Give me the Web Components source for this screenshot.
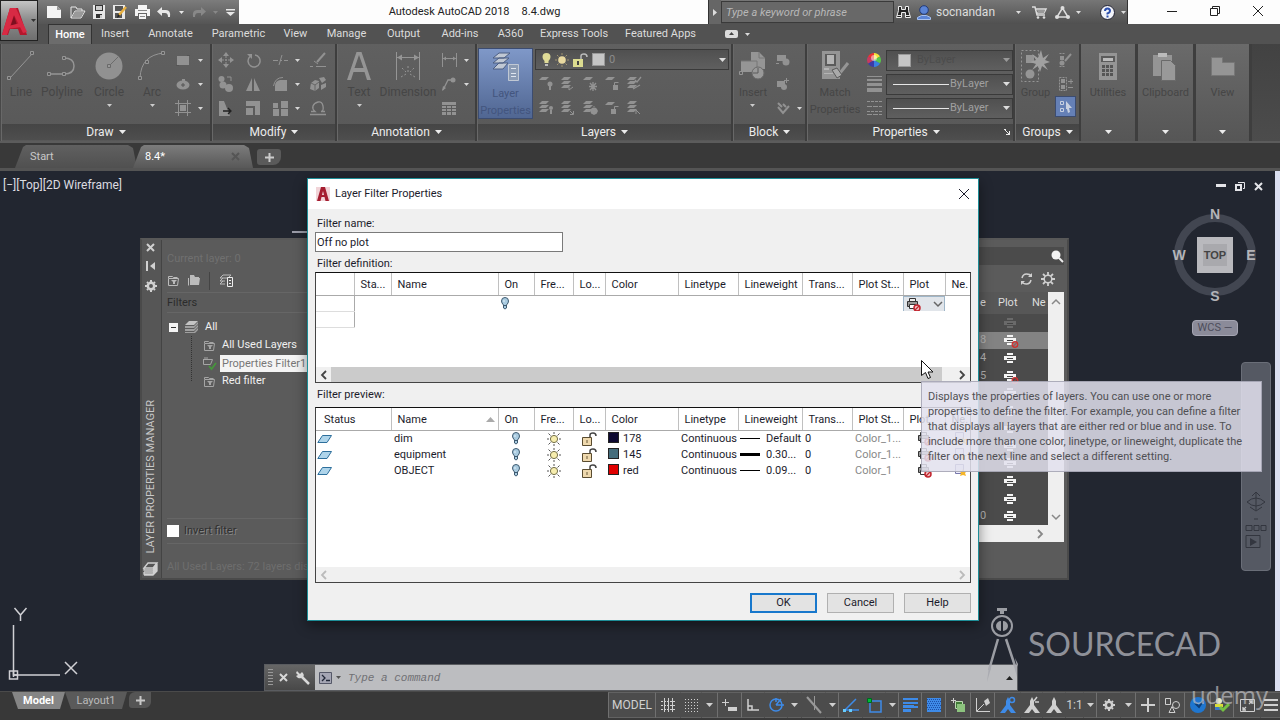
<!DOCTYPE html>
<html lang="en">
<head>
<meta charset="utf-8">
<title>Autodesk AutoCAD 2018 - 8.4.dwg</title>
<style>
html,body{margin:0;height:100%;overflow:hidden;background:#222630}
body{font:11px/14px Roboto,"Liberation Sans",sans-serif;color:#ddd}
</style>
</head>
<body>
<cad-app></cad-app>
<script>
const BASE = `*{box-sizing:border-box}
:host{display:block}
button,input,select{font:inherit;color:inherit;margin:0;padding:0;border:0;background:none;border-radius:0;outline:0}
button{display:flex;align-items:center;justify-content:center}`;
const define = (name, css, html) => customElements.define(name, class extends HTMLElement {
  constructor() {
    super();
    this.attachShadow({mode: 'open'});
  }
  connectedCallback() {
    const t = document.createElement('template');
    t.innerHTML = `<style>${BASE}${css}</style>${typeof html === 'function' ? html(this) : html}`;
    this.shadowRoot.replaceChildren(t.content.cloneNode(true));
  }
});

/* Icon set: [width, height, svg content]. Strokes and fills follow currentColor. */
const F = 'fill="currentColor"';
const S = 'fill="none" stroke="currentColor"';
const sheet = (x, y) => `<path ${F} d="M${x + 3} ${y}h7l-3 3h-7z"/>`;
const stack = sheet(0, 0) + sheet(0, 4) + sheet(0, 8);
const person = `<path ${F} d="M8 0l2 4 0 4 6 8h-5l-3-4-3 4H0l6-8V4z"/>`;
const printer = `<path fill="#eee" stroke="#333" d="M3.5 .5h6v3h-6z"/><path fill="#999" stroke="#333" d="M1.5 3.5h10v5h-10z"/><path fill="#fff" stroke="#333" d="M3.5 6.5h6v4h-6z"/>`;
const noplot = `<circle cx="11" cy="10" r="3" fill="#f3c5c5" stroke="#c2252f" stroke-width="1.5"/><path stroke="#c2252f" stroke-width="1.3" d="M9 12l4-4"/>`;
const miniPrint = `<path ${F} d="M3 0h6v2H3zM0 3h12v4H0zM3 8h6v2H3z"/><path stroke="#444" d="M3 5.5h6"/>`;
const ICONS = {
  logo: [26, 28, `<path fill="#b5162c" d="M0 28L8 1h8l9 27h-7l-2-6H8l-2 6z"/><path fill="#d82a44" d="M8 1h6l11 24-4 1L12 8 5 28H0z"/><path fill="#7d0f20" d="M9 18l3-9 3 9z"/><path fill="#d82a44" d="M3 20l15-4 2 4-15 2z"/>`],
  small: [14, 14, `<path fill="#f1d4d8" d="M0 0h14v14H0z"/><path fill="#a51d30" d="M1 14L5 0h4l4 14H9.5L8.5 10h-3L4.5 14zM6 8h2L7 4z"/>`],
  new: [15, 14, `<path fill="#f4f4f4" d="M0 1h10l4 4v8H0z"/><path fill="#999" d="M10 1v4h4z"/>`],
  open: [16, 13, `<path ${S} d="M1 12V1h5l1 2h5v2M1 12l4-7h10l-4 7z"/><path fill="#999" d="M5 6h9l-3 5H2z"/>`],
  save: [12, 14, `<path fill="#e8e8e8" d="M0 0h12v14H0z"/><path fill="#333" d="M2 0h8v6H2zM3 9h6v4H3z"/><path fill="#ccc" d="M3 1h6v4H3zM7 10h2v3H7z"/>`],
  saveas: [14, 14, `<path fill="#e8e8e8" d="M0 0h12v14H0z"/><path fill="#555" d="M2 1h8v5H2zM2 8h7v5H2z"/><path stroke="#e8b040" stroke-width="2.5" d="M6 10l7-8"/><path fill="#222" d="M4 13l1-4 2 2z"/>`],
  print: [15, 14, `<path fill="#f4f4f4" d="M3 0h9v4H3zM0 4h15v7h-3V8H3v3H0zM4 9h7v5H4z"/><path stroke="#888" d="M5 11.5h5M3 5.5h9"/>`],
  undo: [14, 11, `<path ${F} d="M5 0v3h4q5 0 4 7h-2q0-4-3-4H5v3L0 4.5z"/>`],
  redo: [14, 11, `<path ${F} d="M9 0v3H5Q0 3 1 10h2q0-4 3-4h3v3l5-4.5z"/>`],
  custom: [9, 7, `<path ${F} d="M0 0h9v1.5H0zM0 3h9L4.5 7z"/>`],
  down: [7, 4, `<path ${F} d="M0 0h7L3.5 4z"/>`],
  down5: [5, 3, `<path ${F} d="M0 0h5L2.5 3z"/>`],
  up: [7, 4, `<path ${F} d="M3.5 0L7 4H0z"/>`],
  right: [4, 7, `<path ${F} d="M0 0l4 3.5L0 7z"/>`],
  binoc: [15, 14, `<path fill="#222" stroke="#eee" d="M2.5 1.5h3v3h4v-3h3v4l2 7h-5v-5h-4v5h-5l2-7z"/><path stroke="#ddd" d="M1 10.5h4M10 10.5h4"/>`],
  user: [14, 15, `<circle cx="7" cy="5" r="4.3" fill="#5b84d6" stroke="#223a78"/><path fill="#5b84d6" stroke="#a9c2f0" d="M.5 14.5v-2l4-2h5l4 2v2z"/>`],
  cart: [15, 13, `<path ${S} stroke-width="1.5" d="M0 1h3l2 8h8M4 3h10l-2 4H5"/><path fill="#999" d="M5 4h8l-1 3H6z"/><circle cx="6" cy="11.5" r="1.3" ${F}/><circle cx="12" cy="11.5" r="1.3" ${F}/>`],
  a360: [15, 13, `<path ${S} stroke-width="1.5" d="M7.5 2L2 11h11z"/><circle cx="7.5" cy="2" r="2" ${F}/><circle cx="2" cy="11" r="2" ${F}/><circle cx="13" cy="11" r="2" ${F}/>`],
  help: [15, 15, `<circle cx="7.5" cy="7.5" r="7" fill="#f2f4fa" stroke="#223"/><path fill="none" stroke="#2c4fae" stroke-width="2" d="M5 6q0-2.5 2.5-2.5T10 6q0 1.5-2.5 2.5v1"/><path fill="#2c4fae" d="M6.5 10.5h2v2h-2z"/>`],
  min: [10, 10, `<path ${S} d="M0 5.5h10"/>`],
  restore: [10, 10, `<path ${S} d="M.5 2.5h7v7h-7zM2.5 2.5v-2h7v7h-2"/>`],
  close: [10, 10, `<path ${S} d="M0 0l10 10M10 0L0 10"/>`],
  line: [28, 30, `<path ${S} d="M3 27L25 3"/><path fill="#5b5b5b" stroke="currentColor" d="M.5 25.5h3v3h-3zM23.5 .5h3v3h-3z"/>`],
  pline: [30, 20, `<path ${S} stroke-width="1.5" d="M2 18h15q10 0 10-8t-10-8"/><path fill="#5b5b5b" stroke="currentColor" d="M.5 16.5h3v3h-3zM15.5 16.5h3v3h-3zM15.5 .5h3v3h-3z"/>`],
  circle: [28, 28, `<circle cx="14" cy="14" r="13.5" fill="#919191"/><path stroke="#6c6c6c" d="M14 14l9-9"/><path fill="#999" stroke="#6a6a6a" d="M12.5 12.5h3v3h-3z"/>`],
  arc: [28, 30, `<path ${S} d="M2 27Q3 4 26 2"/><path fill="#5b5b5b" stroke="currentColor" d="M.5 25.5h3v3h-3zM7.5 9.5h3v3h-3zM23.5 .5h3v3h-3z"/>`],
  rect: [14, 11, `<path ${F} d="M1 1h12v9H1z"/><path stroke="#555" d="M0 10.5h3M11 .5h3"/>`],
  ellipse: [14, 11, `<ellipse cx="7" cy="6" rx="6.5" ry="4.5" ${F}/><path stroke="#555" d="M7 4v4M5 6h4"/><path ${F} d="M6 0h3v3H6z"/>`],
  hatch: [16, 16, `<path ${S} d="M3.5 0v16M12.5 0v16M0 3.5h16M0 12.5h16"/><path ${F} d="M5 5h6v6H5z"/>`],
  move: [16, 16, `<path ${S} stroke-dasharray="2 1" d="M8 1v14M1 8h14"/><path ${F} d="M8 0l3 4H5zM8 16l3-4H5zM0 8l4-3v6zM16 8l-4-3v6z"/>`],
  rotate: [14, 15, `<path ${S} stroke-width="1.5" d="M4 3.5A6 6 0 1 0 9 2"/><path ${F} d="M1 1h5v5z"/>`],
  trim: [15, 12, `<path ${S} d="M0 6.5h5M7 6.5h2M11 6.5h4M6 11l3-10"/>`],
  erase: [16, 15, `<path ${S} stroke-width="2" d="M7 9l8-9"/><path ${S} d="M0 13.5h3M6 13.5h10M4 8l4 3"/>`],
  copy: [16, 16, `<circle cx="3.5" cy="3" r="3" ${F}/><circle cx="5" cy="9" r="3.5" ${F}/><circle cx="11" cy="12" r="4" ${F}/><path ${S} d="M9 1h4v4"/>`],
  mirror: [14, 14, `<path ${F} d="M6 1v13H0zM8 1v13h6z"/>`],
  fillet: [14, 14, `<path ${F} d="M2 14V9q0-5 5-6h7v11z"/><path ${S} d="M.5 9Q2 .5 10 .5"/>`],
  explode: [16, 14, `<path ${F} d="M1 6l4-3 4 1v7l-4 3-5-2zM9 1l5-1 2 3-4 3zM11 8l5-2v4l-5 3z"/><path stroke="#666" fill="none" d="M1 6l4 2 4-3M5 8v6"/>`],
  stretch: [14, 15, `<path ${F} d="M0 0h5l6 15H0z"/><path stroke="#222" stroke-width="1.3" d="M4 10h8M9 7l3 3-3 3" fill="none"/>`],
  scale: [14, 14, `<path ${F} d="M0 0h14v14H9V5H0z"/><path ${F} d="M0 7h7v7H0z"/>`],
  array: [15, 15, `<path ${F} d="M8 0h7v7H8zM0 8h6v7H0zM8 8h7v7H8zM0 2h5v5H0z"/>`],
  offset: [16, 14, `<path ${S} stroke-width="1.3" d="M0 13.5h16M1 10.5h4Q2 8 3 5t5-4 5 4-2 5.5h4"/>`],
  text: [24, 28, `<path ${F} d="M0 28L9.5 0h5L24 28h-4l-2.5-8h-11L4 28zM7.5 16h9L12 3z"/>`],
  dim: [26, 28, `<path ${S} d="M1.5 0v28M24.5 0v28M2 5.5h22"/><path ${F} d="M2 5.5l5-3v6zM24 5.5l-5-3v6z"/><path ${S} stroke-dasharray="2 2" d="M13 14v6M6 25l5-3M20 25l-5-3M7 16l4 4M19 16l-4 4"/>`],
  linear: [15, 14, `<path ${S} d="M.5 0v14M14.5 0v14M1 5.5h13"/><path ${F} d="M1 5.5l3-2v4zM14 5.5l-3-2v4z"/>`],
  leader: [14, 14, `<path ${S} stroke-width="1.3" d="M1 13L6 3h3"/><circle cx="11" cy="3" r="2.5" ${F}/><path ${F} d="M0 14l1-5 3 2z"/>`],
  table: [14, 13, `<path ${F} d="M0 0h14v13H0z"/><path stroke="#5b5b5b" d="M0 3.5h14M0 6.5h14M0 9.5h14M4.5 4v9M9.5 4v9"/>`],
  layerprop: [28, 30, `<path ${F} d="M7 1h11l-6 5H1zM7 6h10l-6 5H1zM7 11h9l-5 6H1z" stroke="#4c5e82"/><path fill="#8c9cb5" stroke="#c0c8d4" d="M16.5 12.5h10v16h-10z"/><path stroke="#dfe5ee" d="M19 16.5h5M19 21.5h5M19 24.5h5"/>`],
  l1: [14, 14, sheet(0, 0) + `<circle cx="11" cy="7" r="2.5" ${F}/><path ${F} d="M10 9h2v4h-2z"/>`],
  l2: [14, 14, stack + `<path ${S} d="M8 13l4-3M8 13v-3"/>`],
  l3: [14, 14, sheet(0, 0) + `<path ${S} stroke-width="1.3" d="M10 5v9M6 9.5h8M7 6l6 7M13 6l-6 7"/>`],
  l4: [14, 14, sheet(0, 0) + `<path ${F} d="M8 8h5v5H8z"/><path ${S} d="M9.5 8V5.5h4"/>`],
  l5: [14, 14, stack + `<path ${S} stroke-width="1.3" d="M8 3l2 2 4-5M6 12l7-4"/>`],
  l6: [14, 14, stack + `<circle cx="12" cy="7" r="2" ${F}/><path ${F} d="M11 9h2v4h-2z"/>`],
  l7: [14, 14, stack + `<path ${S} d="M9 10l3 3M12.5 10v3.5H9"/>`],
  l8: [15, 14, stack + `<circle cx="11" cy="10" r="3.5" ${F}/><path ${S} stroke-dasharray="1 1" d="M11 5v9M6 10h9"/>`],
  l9: [14, 14, sheet(0, 1) + `<path ${F} d="M6 8h5v5H6z"/><path ${S} d="M9.5 8V5.5h4"/>`],
  l10: [14, 14, stack + `<path ${S} d="M9 9l4 4M9 9v4"/>`],
  bulb: [9, 14, `<path fill="#e0dc98" d="M4.5 0a4 4 0 0 1 4 4q0 2-2 4v2h-4V8q-2-2-2-4a4 4 0 0 1 4-4z"/><path fill="#bbb" d="M3 11h3v2H3z"/>`],
  bluebulb: [8, 13, `<path fill="#a9cbe0" stroke="#3e5a70" d="M4 .5q3.5 0 3.5 3.5Q7.5 6 5.5 8v3q-1.5 2-3 0V8Q.5 6 .5 4 .5 .5 4 .5z"/><path stroke="#3e5a70" d="M2 8.5h4"/><path stroke="#e6f2fa" d="M3 3v2"/>`],
  sun: [14, 14, `<circle cx="7" cy="7" r="3.8" fill="#e9d9a0"/><path stroke="#a09470" d="M7 0v2M7 12v2M0 7h2M12 7h2M2 2l1.5 1.5M12 2l-1.5 1.5M2 12l1.5-1.5M12 12l-1.5-1.5"/>`],
  sun2: [14, 14, `<circle cx="7" cy="7" r="3.6" fill="#f6edae" stroke="#75704a"/><path stroke="#555" d="M7 0v2M7 12v2M0 7h2M12 7h2M1.5 1.5l2 2M12.5 1.5l-2 2M1.5 12.5l2-2M12.5 12.5l-2-2"/>`],
  lock: [15, 14, `<path fill="#dcdc90" d="M0 6h10v8H0z"/><path fill="none" stroke="#bbb" stroke-width="1.5" d="M8 6V3q0-2 3-2t3 3"/><path fill="#444" d="M4 8h2v4H4z"/>`],
  lock2: [15, 14, `<path fill="#efd9ae" stroke="#5a4c30" d="M.5 5.5h9v8h-9z"/><path fill="none" stroke="#444" stroke-width="1.5" d="M8 5V3q0-2 3-2t3 3"/><path stroke="#6b5a38" d="M5 8v3"/>`],
  insert: [28, 28, `<path ${F} d="M2 9h16v11H2zM12 0h8l6 6v11H12z"/><path stroke="#777" d="M20 0v6h6M2 9h16v11" fill="none"/><circle cx="19" cy="21" r="6" fill="#999" stroke="#6a6a6a"/><path stroke="#5b5b5b" d="M19 21v-5M14 21h5"/><path ${S} d="M.5 19.5h3v3h-3z"/>`],
  b1: [14, 11, `<path ${F} d="M1 0h9v6H1z"/><circle cx="10" cy="7" r="3.5" ${F}/><path ${S} d="M0 8.5h3"/>`],
  b2: [14, 13, `<path ${F} d="M1 3h8v6H1z"/><circle cx="8" cy="9" r="3" ${F}/><path ${S} d="M10.5 0v5M8 2.5h5"/>`],
  b3: [13, 12, `<path ${S} stroke-width="2" d="M1 1l4 4M1 5l5 6 6-7M6 2l3 3"/>`],
  match: [30, 30, `<path ${F} d="M2 0h18v28H2z"/><path fill="#5b5b5b" d="M5 3h11v12H5z"/><path fill="#b4b4b4" d="M7 4h7v9H7zM4 17h5v2H4zM4 22h9v1H4z"/><path ${S} stroke-width="3" d="M20 22l8-10"/><path fill="#aaa" stroke="#5b5b5b" d="M12 19l5-2 5 7-5 3z"/>`],
  wheel: [14, 14, `<path fill="#e33" d="M7 7L1 3.5A7 7 0 0 1 7 0z"/><path fill="#f8e23a" d="M7 7V0a7 7 0 0 1 6 3.5z"/><path fill="#58c84a" d="M7 7l6-3.5a7 7 0 0 1 0 7z"/><path fill="#3a7fe0" d="M7 7l6 3.5A7 7 0 0 1 7 14z"/><path fill="#3d3aa8" d="M7 7v7a7 7 0 0 1-6-3.5z"/><path fill="#c83a60" d="M7 7l-6 3.5a7 7 0 0 1 0-7z"/><circle cx="7" cy="5" r="3" fill="#fff" opacity=".5"/>`],
  weights: [15, 16, `<path ${F} d="M0 0h15v1H0zM0 3h15v2H0zM0 7h15v3H0zM0 12h15v4H0z"/>`],
  types: [15, 14, `<path ${S} stroke-dasharray="3 1" d="M0 .5h15M0 10.5h15"/><path ${S} stroke-dasharray="5 1" d="M0 5.5h15M0 13.5h15"/>`],
  group: [29, 32, `<path ${S} stroke-dasharray="2 2" d="M.5 .5h17v31H.5z"/><path ${F} d="M5 5h8v8H5z"/><circle cx="9" cy="24" r="4.5" ${F}/><path fill="#a0a0a0" d="M20 0l2 8 6-4-4 6 5 2-6 2 4 6-6-4-2 6-2-6-6 4 4-6-6-2 6-2-4-6 6 4z"/>`],
  g1: [13, 14, `<path ${S} stroke-dasharray="2 1" d="M.5 .5h6M.5 13.5h6"/><circle cx="3" cy="10" r="2.5" ${F}/><path ${F} d="M1 3h4v4H1z"/><path ${S} stroke-width="2" d="M6 8l6-7"/>`],
  g2: [14, 14, `<path ${S} stroke-dasharray="2 1" d="M.5 .5h7v13h-7z"/><path ${F} d="M2 2h4v4H2zM2 8h4v4H2z"/><path ${S} d="M12 2v5M9 4.5h5M9 10.5h5"/>`],
  g3: [12, 13, `<path ${S} d="M.5 1.5h3v3h-3zM.5 8.5h3v3h-3z"/><path ${F} d="M6 1l6 7H9l1 4-2 1-1-4H6z"/>`],
  calc: [18, 27, `<path ${F} d="M0 0h18v27H0z"/><path fill="#5b5b5b" d="M2 3h14v6H2z"/><path fill="#bbb" d="M4 5h10v3H4z"/><path stroke="#555" stroke-dasharray="3 1" d="M3 13.5h12M3 17.5h12M3 21.5h12" stroke-width="3"/>`],
  clip: [24, 29, `<path ${F} d="M0 3h19v21H0z"/><path fill="#bbb" d="M5 1h9v4H5z"/><path fill="#999" stroke="#6a6a6a" d="M8.5 8.5h9l5 5v15h-14z"/>`],
  view: [24, 19, `<path ${F} stroke="#777" d="M.5 .5h11v5h12v13H.5z"/>`],
  corner: [6, 6, `<path ${S} d="M0 .5h2M0 0l5 5M5.5 2v4M2 5.5h4"/>`],
  plus: [9, 9, `<path ${S} stroke-width="2" d="M4.5 0v9M0 4.5h9"/>`],
  x: [9, 9, `<path ${S} stroke-width="2" d="M1 1l7 7M8 1L1 8"/>`],
  pin: [9, 10, `<path ${F} d="M0 0h2v10H0zM9 1v8L4 5z"/>`],
  cog: [14, 14, `<circle cx="7" cy="7" r="3.8" ${S} stroke-width="1.5"/><path ${S} stroke-width="1.8" d="M7 0v3M7 11v3M0 7h3M11 7h3M2 2l2.2 2.2M12 2L9.8 4.2M2 12l2.2-2.2M12 12l-2.2-2.2"/>`],
  gearsolid: [12, 12, `<circle cx="6" cy="6" r="3.2" ${S} stroke-width="2.5"/><path ${S} stroke-width="2" d="M6 0v2M6 10v2M0 6h2M10 6h2M2 2l1 1M10 2L9 3M2 10l1-1M10 10L9 9"/>`],
  folderF: [12, 11, `<path ${S} d="M1.5 10.5h9l1-7h-10zM1.5 3V1.5h4l1 1h4"/><path ${F} d="M4 5h6L8 7v2H6V7z"/>`],
  folder: [12, 11, `<path ${F} d="M2 0h4l1 2h4v1h1l-1 7H2z"/><path ${S} d="M.5 3v7.5"/>`],
  states: [15, 13, `<path ${S} d="M4 1h8L9 4H1zM1 7h5M1 10h5M4 4L1 7M4 7l-3 3"/><path fill="#5b5b5b" stroke="#eee" d="M8.5 3.5h5v9h-5z"/><path stroke="#eee" d="M10 6.5h2M10 9.5h2"/>`],
  books: [13, 12, `<path fill="#c4c4c4" d="M4 0h9L9 4H0z"/><path fill="#a0a0a0" d="M0 5h9l4-4v2L9 7H0zM0 8h9l4-4v2l-4 4H0zM0 11h9l4-4v2l-3 3H0z"/>`],
  check: [13, 13, `<path ${S} d="M.5 2v5.5h7l2-5H1M1 1h4"/><path fill="none" stroke="#46963c" stroke-width="1.8" d="M6 9l2.5 3L13 6"/>`],
  minus: [9, 9, `<path fill="#f4f4f4" d="M0 0h9v9H0z"/><path stroke="#333" d="M2 4.5h5"/>`],
  layers: [15, 14, `<path ${S} stroke-width="1.3" d="M1 6l4-5h9l-4 5zM1 6v2h9l4-5v2L10 10H1M1 10v2h9l4-5v2l-4 4H1"/>`],
  search: [12, 12, `<circle cx="5" cy="5" r="4.5" fill="#f2f2f2"/><path stroke="#eee" stroke-width="2" d="M8 8l4 4"/>`],
  refresh: [11, 12, `<path ${S} stroke-width="1.5" d="M1 5q1-4 4.5-4T10 3M10 7q-1 4-4.5 4T1 9"/><path ${F} d="M11 0v4H7zM0 12V8h4z"/>`],
  print2: [12, 10, miniPrint],
  noprint2: [12, 10, miniPrint + `<circle cx="11" cy="9.5" r="2.8" fill="none" stroke="#d0302f" stroke-width="1.3"/><path stroke="#d0302f" d="M9 11.5l4-4"/>`],
  noprint: [15, 14, printer + noplot],
  newvp: [15, 13, `<path fill="#eef" stroke="#77a" d="M2.5 .5h8v9h-8z"/><path fill="#f5b52a" d="M10 5l1 2h3l-2 2 1 3-3-1-3 1 1-3-2-2h3z"/>`],
  sheet: [16, 8, `<path fill="#aed4ea" stroke="#2d6f9c" d="M5.5 .5h9l-4.5 7H.8z"/>`],
  asc: [9, 5, `<path fill="#aaa" d="M4.5 0L9 5H0z"/>`],
  lt: [5, 8, `<path ${S} stroke-width="1.8" d="M5 0L1 4l4 4"/>`],
  gt: [5, 8, `<path ${S} stroke-width="1.8" d="M0 0l4 4-4 4"/>`],
  vdown: [8, 5, `<path ${S} stroke-width="1.5" d="M0 0l4 4 4-4"/>`],
  vup: [8, 5, `<path ${S} stroke-width="1.5" d="M0 5l4-4 4 4"/>`],
  wmin: [10, 4, `<path ${F} d="M0 0h10v3H0z"/>`],
  wrest: [10, 10, `<path ${S} stroke-width="2" d="M1 4h5v5H1z"/><path ${S} d="M3 1.5h6.5v6H8"/>`],
  wrench: [14, 14, `<path ${S} stroke-width="2.5" d="M6 6l7 7"/><path ${F} d="M1 0l3 3 2-2q3 3 1 5T2 7L0 5l2-1-2-2z"/>`],
  prompt: [13, 12, `<path fill="#a5a6b4" stroke="#555868" d="M.5 .5h12v11H.5z"/><path fill="none" stroke="#222838" stroke-width="1.3" d="M3 3l3 3-3 3M7 8.5h4"/>`],
  sgrid: [14, 14, `<path ${S} d="M3.5 0v14M7.5 0v14M11.5 0v14"/><path ${S} stroke-dasharray="2 1" d="M0 3.5h14M0 7.5h14M0 11.5h14"/>`],
  snap: [14, 14, `<path ${S} stroke-dasharray="1 2" d="M1 1.5h13M1 4.5h13M1 7.5h13M1 10.5h13M1 13.5h13"/>`],
  dyn: [15, 13, `<path ${S} d="M3.5 0v7M0 3.5h7"/><path ${F} d="M6 8h9v4H6z"/>`],
  ortho: [12, 12, `<path ${S} stroke-width="1.5" d="M1 0v11h11M1 7h4v4"/>`],
  polar: [15, 14, `<circle cx="7" cy="7" r="6" ${S} stroke-width="1.5"/><path ${S} stroke-width="1.5" d="M7 7h8M7 7l5-6M7 0v4"/>`],
  iso: [16, 18, `<path stroke="#999" d="M1 1l14 16" stroke-width="2"/><path stroke="#999" d="M8.5 0v14"/>`],
  otrack: [16, 13, `<path ${S} stroke-width="1.5" d="M13 0L2 11h14"/><path fill="#6cf" d="M0 10h3v3H0zM6 10h3v3H6z"/>`],
  osnap: [15, 15, `<path ${S} stroke-width="1.5" d="M3 3h11v11H3z"/><path fill="#0b3" stroke="#062" d="M.5 .5h4v4h-4z"/>`],
  lwt: [15, 14, `<path ${F} d="M0 0h15v2H0zM0 4h15v2H0zM0 7h11v3H0zM0 11h8v3H0zM5 8h10v2H5z"/>`],
  trans: [14, 14, `<path ${F} d="M0 0h14v14H0z"/><path stroke="#1c4fa8" stroke-dasharray="1 1" d="M0 1.5h14M1 3.5h14M0 5.5h14M1 7.5h14M0 9.5h14M1 11.5h14"/>`],
  sel: [14, 14, `<path ${S} d="M0 2.5h5M2.5 0v5"/><path fill="#3f7b36" stroke="#bcd8b4" d="M4.5 3.5h7v7h-7z"/><path fill="#8cc37e" d="M6 6h8v8H6z"/>`],
  gizmo: [15, 15, `<path ${S} d="M1.5 0v13.5H15M2 13L9 6"/><path ${F} d="M9 3l4-3 2 5-4 3z"/>`],
  anno: [16, 16, person + `<circle cx="12" cy="3" r="2.5" ${S} stroke-width="1.5"/>`],
  anno2: [16, 16, person + `<path ${S} stroke-width="1.5" d="M10 4l3-4M11 5h4"/>`],
  anno3: [16, 16, person],
  bigplus: [14, 14, `<path ${S} stroke-width="2" d="M7 0v14M0 7h14"/>`],
  shapes: [15, 15, `<path ${S} d="M.5 .5h5v6h-5zM4 14.5l3-6 3 6z"/><circle cx="11" cy="7" r="3.5" ${S}/>`],
  perf: [16, 16, `<circle cx="8" cy="8" r="8" fill="#1f76cf"/><path stroke="#0c3e78" stroke-width="2" d="M5 6l4 4 4-6" fill="none"/>`],
  trust: [14, 14, `<circle cx="4" cy="3" r="3" fill="#e5e5c8"/><path fill="#d8dc3a" d="M0 6h8v3H0z"/><path fill="#3d78c8" d="M0 9h6v3H0z"/><path fill="none" stroke="#74c043" stroke-width="3" d="M5 9l3 3 6-6"/>`],
  full: [15, 13, `<path ${S} d="M.5 .5h14v12H.5z"/><path ${S} stroke-width="1.3" d="M9 5l3-3M9 2h3v3M6 8l-3 3M3 8v3h3"/>`],
  burger: [14, 12, `<path ${F} d="M0 0h14v2H0zM0 5h14v2H0zM0 10h14v2H0z"/>`],
  cloud: [13, 8, `<rect width="13" height="8" rx="2" ${F}/><path fill="#444" d="M6.5 2L9 5H4z"/>`],
  ucs: [72, 74, `<path ${S} stroke-width="1.5" d="M5.5 18v52M6 68h46"/><path ${S} stroke-width="1.5" d="M1.5 64h8v8h-8zM5.5 64v4h4M6.5 1l6 7 6-7M12.5 8v6M57 55l12 12M69 55L57 67"/>`],
  compass: [30, 74, `<path ${F} d="M9 0h10v3H9zM12 3h4v3h-4z"/><circle cx="14" cy="18" r="10" ${S} stroke-width="2"/><path ${F} d="M13 13v10a5 5 0 0 1 0-10zM15 13v10a5 5 0 0 0 0-10z"/><path ${S} stroke-width="2.5" d="M10 31L1 62M18 31l9 27"/><path ${F} d="M1 58l2 2-4 14zM26 58l3-1 0 12zM27 50l3 6-1 3z"/>`],
  cursor: [12, 19, `<path fill="#fff" stroke="#111" d="M.5 .5v15l4-3 2.5 6 2.5-1-2.5-5.5h5z"/>`],
  cube: [90, 98, `<circle cx="45" cy="49" r="37" fill="none" stroke="#424651" stroke-width="8"/><path fill="#b9b9bd" d="M27 31h36v36H27z"/><path fill="#a9a9ad" d="M33 38h24v22H33z"/>`],
  nav: [22, 60, `<path ${S} d="M11 0v18M7 4l4-4 4 4M2 10q9-8 18 0-9 8-18 0M5 15l6 4 6-4M9 27h4M1 33.5h6v5H1zM9 33.5h5v5H9zM16 33.5h5v5h-5zM1 43.5h14v12H1z"/><path ${F} d="M5 46l7 4-7 4z"/>`]
};
define('cad-icon', `:host{display:inline-flex;flex:none}svg{display:block;overflow:visible}`, el => {
  const [w, h, body] = ICONS[el.getAttribute('name')];
  return `<svg width="${w}" height="${h}" viewBox="0 0 ${w} ${h}" aria-hidden="true">${body}</svg>`;
});
const I = (n, c) => `<cad-icon name="${n}"${c ? ` class="${c}"` : ''}></cad-icon>`;

/* ---------- Title bar and menu tabs ---------- */
define('title-bar', `
:host{display:grid;grid-template-columns:38px 1fr;grid-template-rows:24px 20px;background:#525252}
.app{grid-row:1/3;align-self:start;height:41px;border:1px solid #222;background:linear-gradient(#c4c4c4,#8a8a8a 50%,#6f6f6f);gap:3px;color:#333;position:relative;z-index:2}
.bar{display:grid;grid-template-columns:201px 1fr 420px 152px}
.quick{display:flex;align-items:center;padding:0 4px 0 9px;justify-content:space-between;background:linear-gradient(#7c7c7c,#555);color:#e8e8e8}
.dim{color:#888}
.title{background:#fdfdfd;color:#222;display:flex;align-items:center;justify-content:center;gap:12px;padding-left:2px}
.info{display:grid;grid-template-columns:12px 173px 1fr;background:linear-gradient(#767676,#505050);border:solid #333;border-width:0 1px}
.info>button{background:#666}
input{background:#686868;border:1px solid #3a3a3a;height:22px;padding-left:4px;font-style:italic;margin-top:1px}
input::placeholder{color:#b8b8b8;opacity:1}
.acc{display:grid;grid-template-columns:18px 24px 74px 16px 26px 20px 12px 12px 22px 10px;place-items:center}
.acc b{font-weight:400;font-size:12px;justify-self:start}
.win{background:#fdfdfd;color:#222;display:grid;grid-template-columns:1fr 1fr 1fr;padding:0 0 2px 22px}
nav{display:grid;grid-template-columns:10px 44px 46px 65px 71px 43px 59px 55px 58px 43px 84px 89px 60px;color:#dcdcdc}
nav a{display:flex;align-items:center;justify-content:center;color:inherit;text-decoration:none;white-space:nowrap}
nav a.on{background:#6c6c6c;border:1px solid #333;border-bottom:0;color:#fff;font-weight:500}
nav i{display:flex;gap:7px;align-items:center;justify-content:center;padding-left:5px}`,
`<button class="app" aria-label="Application menu">${I('logo')}${I('down5')}</button>
<div class="bar">
 <div class="quick">${['new','open','save','saveas','print','undo','down5'].map(n => `<button>${I(n)}</button>`).join('')}<button class="dim">${I('redo')}</button><button class="dim">${I('down5')}</button><button>${I('custom')}</button></div>
 <div class="title"><span>Autodesk AutoCAD 2018</span><span>8.4.dwg</span></div>
 <div class="info"><button aria-label="Expand">${I('right')}</button><input aria-label="Search" placeholder="Type a keyword or phrase">
 <div class="acc"><button>${I('binoc')}</button>${I('user')}<b>socnandan</b>${I('down5')}<button>${I('cart')}</button><button>${I('a360')}</button>${I('down5')}<i></i><button>${I('help')}</button>${I('down5')}</div></div>
 <div class="win"><button aria-label="Minimize">${I('min')}</button><button aria-label="Restore">${I('restore')}</button><button aria-label="Close">${I('close')}</button></div>
</div>
<nav><span></span>${['Home','Insert','Annotate','Parametric','View','Manage','Output','Add-ins','A360','Express Tools','Featured Apps'].map((t, i) => `<a href="#"${i ? '' : ' class="on"'}>${t}</a>`).join('')}<i>${I('cloud')}${I('down5')}</i></nav>`);

/* ---------- Ribbon ---------- */
define('big-tool', `
:host{height:74px;flex:none}
button{width:100%;height:100%;display:grid;grid-template-rows:36px auto 1fr;justify-items:center;align-items:center;color:#959595}
span{display:block;color:#464646;font-size:12px;line-height:17px;text-align:center;white-space:nowrap}
:host([two]) span{white-space:pre-line}
:host([two]) span,:host([small]) span{font-size:11px}
.a{color:#ccc;align-self:start;padding-top:3px}
:host([blue]) button{background:linear-gradient(#7f98c8,#506692);border:1px solid #3c4c70;color:#c0c8d4;height:71px}
:host([blue]) span{color:#43557e}`,
el => `<button>${I(el.getAttribute('icon'))}<span>${el.getAttribute('label')}</span>${el.hasAttribute('arrow') ? I('down5', 'a') : ''}</button>`);

define('ribbon-panel', `
:host{display:grid;grid-template-rows:80px 16px;background:linear-gradient(#606060,#585858);border-right:2px solid #3e3e3e;border-left:1px solid #686868}
.body{display:flex;padding-top:4px;overflow:hidden}
.t{background:linear-gradient(#454545,#4e4e4e);display:flex;align-items:center;font-size:12px;color:#ececec}
.t div{flex:1;display:flex;align-items:center;justify-content:center;gap:5px}
.t>cad-icon{padding-right:3px}
:host([tall]){background:linear-gradient(#6a6a6a,#565656);border-left:0;border-right:3px solid #3e3e3e}
:host([tall]) .t{background:none}`,
el => `<div class="body"><slot></slot></div><div class="t"><div>${el.getAttribute('label') || ''}${I('down')}</div>${el.hasAttribute('corner') ? I('corner') : ''}</div>`);

const selectBox = (icon, label, opts, off) => `<label class="dd${off ? ' off' : ''}">${icon}<select aria-label="${label}"><option>${opts}</option></select>${I('down')}</label>`;
const tools = (cols, cells) => `<div class="tools" style="grid-template-columns:${cols}">${cells.map(c => c === 'v' ? `<button class="v">${I('down5')}</button>` : c ? `<button${c === 'g3' ? ' class="hot"' : ''}>${I(c)}</button>` : '<i></i>').join('')}</div>`;
define('cad-ribbon', `
:host{display:grid;grid-template-columns:211px 125px 140px 256px 74px 208px 66px 57px 58px 56px 1fr;border-bottom:2px solid #5c5c5c;color:#929292;padding-left:1px;height:99px;background:linear-gradient(#424242,#4c4c4c)}
.tools{display:grid;grid-auto-rows:24px;flex:none;align-content:start}
.v{color:#d8d8d8}
.hot{background:#6580b6;border:1px solid #3c4c70;color:#c8d0e0;height:21px}
.lay{width:196px;padding:1px 0 0 2px}
.dd{display:flex;align-items:center;height:21px;border:1px solid #3a3a3a;background:linear-gradient(#505050,#5f5f5f);gap:4px;padding:0 2px 0 6px;color:#ddd}
.dd select{appearance:none;flex:1;color:#8b8b8b;min-width:0}
.sw{width:13px;height:13px;background:#c6c6c6;border:1px solid #999}
.lay .tools{margin-top:2px}
.props{display:grid;grid-template-rows:24px 24px 24px;width:127px}
.props .dd{gap:1px;height:21px;align-self:center}
.props .dd select{color:#a0a0a0}
.props .dd.off{gap:6px;padding-left:11px;color:#999}
.props .dd.off select{color:#4c4c4c}
.ln{width:56px;height:1px;background:#e6e6e6}`,
`<ribbon-panel label="Draw"><big-tool icon="line" label="Line" style="width:38px"></big-tool><big-tool icon="pline" label="Polyline" style="width:44px"></big-tool><big-tool icon="circle" label="Circle" arrow style="width:50px"></big-tool><big-tool icon="arc" label="Arc" arrow style="width:36px"></big-tool>${tools('26px 8px', ['rect','v','ellipse','v','hatch','v'])}</ribbon-panel>
<ribbon-panel label="Modify">${tools('26px 28px 26px 8px 34px', ['move','rotate','trim','v','erase','copy','mirror','fillet','v','explode','stretch','scale','array','v','offset'])}</ribbon-panel>
<ribbon-panel label="Annotation"><big-tool icon="text" label="Text" arrow style="width:42px"></big-tool><big-tool icon="dim" label="Dimension" style="width:56px"></big-tool>${tools('26px 8px', ['linear','v','leader','v','table',''])}</ribbon-panel>
<ribbon-panel label="Layers"><big-tool blue two icon="layerprop" label="Layer&#10;Properties" style="width:55px"></big-tool><div class="lay">${selectBox(I('bulb') + I('sun') + I('lock') + '<span class="sw"></span>', 'Current layer', '0')}${tools('repeat(5,22px)', ['l1','l2','l3','l4','l5','l6','l7','l8','l9','l10'])}</div></ribbon-panel>
<ribbon-panel label="Block"><big-tool icon="insert" label="Insert" arrow small style="width:38px"></big-tool>${tools('22px 10px', ['b1','','b2','','b3','v'])}</ribbon-panel>
<ribbon-panel label="Properties" corner><big-tool two icon="match" label="Match&#10;Properties" style="width:54px"></big-tool>${tools('24px', ['wheel','weights','types'])}<div class="props">${selectBox('<span class="sw"></span>', 'Object color', 'ByLayer', true)}${selectBox('<span class="ln"></span>', 'Lineweight', 'ByLayer')}${selectBox('<span class="ln"></span>', 'Linetype', 'ByLayer')}</div></ribbon-panel>
<ribbon-panel label="Groups"><big-tool icon="group" label="Group" small style="width:39px"></big-tool>${tools('21px', ['g1','g2','g3'])}</ribbon-panel>
<ribbon-panel tall><big-tool icon="calc" label="Utilities" small style="width:54px"></big-tool></ribbon-panel>
<ribbon-panel tall><big-tool icon="clip" label="Clipboard" small style="width:55px"></big-tool></ribbon-panel>
<ribbon-panel tall><big-tool icon="view" label="View" small style="width:53px"></big-tool></ribbon-panel>`);

define('file-tabs', `
:host{display:flex;height:28px;background:#393939;border-bottom:3px solid #545454;padding:2px 0 0 15px}
a{display:flex;align-items:center;justify-content:space-between;height:23px;color:#c8c8c8;text-decoration:none;background:linear-gradient(#606060,#505050);width:122px;padding:0 14px 0 15px;clip-path:polygon(8px 2px,11px 0,calc(100% - 9px) 0,calc(100% - 4px) 3px,100% 100%,0 100%)}
a.on{background:linear-gradient(#7c7c7c,#585858);color:#fff;margin-left:-4px;width:120px;padding:0 13px 0 12px}
a.on cad-icon{color:#555}
button{width:24px;height:16px;margin:4px 0 0 4px;background:#5a5a5a;border-radius:3px 3px 8px 3px;color:#ccc}`,
`<a href="#">Start</a><a href="#" class="on">8.4*${I('x')}</a><button aria-label="New tab">${I('plus')}</button>`);

/* ---------- Layer properties palette ---------- */
define('layer-palette', `
:host{display:grid;grid-template-columns:20px 1fr 91px;background:#5b5b5b;border:2px solid #4a4a4a;border-top-color:#585858;color:#ddd}
.rail{border-right:1px solid #444;display:flex;flex-direction:column;align-items:center;padding:3px 2px 2px 0;gap:9px;background:#565656;color:#d0d0d0}
.rail span{writing-mode:vertical-rl;transform:rotate(180deg);font-size:11px;line-height:14px;margin-top:auto;color:#c8c8c8}
.left{display:grid;grid-template-rows:29px 23px 21px auto 1fr 26px 34px;padding-left:5px}
.cur{align-self:end;color:#707070;padding-bottom:3px}
.bar{display:flex;gap:9px;align-items:center;color:#bbb}
.bar i{width:1px;height:18px;background:#444}
.filters{color:#2c2c2c;line-height:19px;border-top:1px solid #666;border-bottom:1px solid #666}
ul{list-style:none;margin:0;padding:5px 0 0 2px;color:#f0f0f0;line-height:18px}
li{display:flex;align-items:center;gap:7px;height:18px}
li.sub{display:block;height:54px}
ul ul{padding:0 0 0 21px;margin-left:13px;background:repeating-linear-gradient(#333 0 1px,transparent 1px 2px) 9px 0/1px 45px no-repeat}
ul ul li{gap:6px}
ul ul cad-icon{width:13px;color:#a5a5a5}
.s{background:#f4f4f4;color:#777;padding:0 2px;line-height:17px;margin-left:-2px;white-space:nowrap}
.inv{display:flex;align-items:center;gap:5px;color:#303030;text-shadow:1px 1px #888;border-bottom:1px solid #666;border-top:1px solid #666}
.inv input{width:12px;height:12px;appearance:none;background:#fff}
.st{color:#6e6e6e;padding-top:15px;line-height:16px;white-space:nowrap}
.right{display:grid;grid-template-rows:7px 18px 27px 233px 17px 1fr;padding-right:3px}
.find{background:#4b4b4b;display:flex;justify-content:flex-end;align-items:center;padding-right:1px}
.acts{display:flex;justify-content:flex-end;align-items:center;gap:9px;padding-right:9px;color:#d0d0d0}
.list{display:grid;grid-template-columns:1fr 16px;overflow:hidden}
.sb{background:#efefef;color:#888;display:flex;flex-direction:column;justify-content:space-between;align-items:center;padding:7px 0 5px}
.hs{background:#efefef;color:#888;display:flex;justify-content:flex-end;align-items:center;padding-right:21px}
.tb{display:flex;flex-direction:column;background:#4b4b4b;min-width:0;overflow:hidden}
.tb>div{display:grid;grid-template-columns:8px 1fr;flex:1;align-items:center;color:#b4b4b4;padding-left:4px}
.tb>div>cad-icon{margin-left:16px;color:#f4f4f4}
.tb>div.h{flex:0 0 22px;grid-template-columns:18px 34px 1fr;white-space:nowrap;background:#575757;color:#ddd}
.tb>div.hl{background:#838383}
.tb>div.fade>cad-icon{color:#6a6a6a}`,
() => {
  const rows = [['', 'print2', 'fade'], ['8', 'noprint2', 'hl'], ['4', 'print2'], ['5', 'noprint2'], ['', 'print2'], ['', 'print2'], ['', 'print2'], ['', 'print2'], ['', 'print2'], ['', 'print2'], ['', 'print2'], ['0', 'print2']];
  return `<div class="rail">${I('x')}${I('pin')}${I('gearsolid')}<span>LAYER PROPERTIES MANAGER</span>${I('layers')}</div>
<div class="left"><div class="cur">Current layer: 0</div><div class="bar">${I('folderF')}${I('folder')}<i></i>${I('states')}</div><div class="filters">Filters</div>
<ul><li>${I('minus')}${I('books')}All</li><li class="sub"><ul><li>${I('folderF')}<span>All Used Layers</span></li><li>${I('check')}<span class="s">Properties Filter1</span></li><li>${I('folderF')}<span>Red filter</span></li></ul></li></ul><i></i>
<label class="inv"><input type="checkbox">Invert filter</label><div class="st">All Used Layers: 72 layers dis</div></div>
<div class="right"><i></i><div class="find">${I('search')}</div><div class="acts">${I('refresh')}${I('cog')}</div>
<div class="list"><div class="tb"><div class="h"><span>e</span><span>Plot</span><span>Ne</span></div>${rows.map(r => `<div class="${r[2] || ''}"><span>${r[0]}</span>${I(r[1])}</div>`).join('')}</div><div class="sb">${I('vup')}${I('vdown')}</div></div><div class="hs">${I('gt')}</div></div>`;
});

/* ---------- Layer filter dialog ---------- */
define('filter-dialog', `
:host{background:#f0f0f0;border:1px solid #1d8d97;color:#1c1c2c;box-shadow:0 4px 12px rgba(0,0,0,.45)}
header{display:flex;align-items:center;gap:5px;background:#fff;height:30px;padding:0 9px 0 8px}
header button{margin-left:auto}
h2{font-size:11px;font-weight:400;margin:0}
form{padding:8px 7px 6px;display:flex;flex-direction:column}
form>label{line-height:14px;padding-left:2px}
input{display:block;width:248px;height:20px;border:1px solid #7a7a7a;background:#fff;padding-left:1px;margin:1px 0 5px}
.box{border:1px solid #444;border-top-color:#111;background:#fff;display:flex;flex-direction:column;justify-content:space-between;overflow:hidden}
.b1{height:111px;margin:1px 0 5px}
.b2{height:176px;margin:5px 0 10px}
table{border-collapse:collapse;table-layout:fixed;width:654px}
th{font-weight:400;text-align:left;height:22px;padding:2px 0 0 6px;border-right:1px solid #c0c0c0;border-bottom:1px solid #aaa;white-space:nowrap;overflow:hidden}
th:last-child{border-right:0}
th div{display:flex;justify-content:space-between;align-items:center;padding-right:3px}
td{height:16px;padding:0 0 0 3px;white-space:nowrap;overflow:hidden;line-height:15px;vertical-align:middle}
td cad-icon{vertical-align:middle}
.b1 td:first-child{border-right:1px solid #aaa;border-bottom:1px solid #ddd}
.c{text-align:center;padding:0}
.sw{display:inline-block;width:11px;height:11px;border:1px solid #222;vertical-align:-1px;margin-right:4px}
.w{display:inline-block;width:20px;background:#000;vertical-align:middle;margin:0 6px 0 -1px}
.g{color:#888}
.scroll{display:flex;justify-content:space-between;align-items:center;height:15px;padding:0 5px;background:#f0f0f0;color:#bbb}
.b1 .scroll{color:#444;background:linear-gradient(90deg,#f0f0f0 15px,#cbcbcb 15px,#cbcbcb calc(100% - 28px),#f0f0f0 calc(100% - 28px))}
.pick{display:flex;align-items:center;justify-content:space-between;background:#e1e5ea;border:1px solid #9fb6c8;border-bottom:0;height:15px;padding:2px 2px 0;position:relative;color:#666;overflow:hidden}
.pick select{appearance:none;position:absolute;inset:0;width:100%;height:100%}
footer{display:flex;justify-content:flex-end;gap:10px}
footer button{width:67px;height:20px;background:#e3e3e3;border:1px solid #b0b0b0}
footer .ok{border:2px solid #1878cc}`,
() => {
  const W1 = [38, 37, 107, 36, 39, 32, 73, 60, 64, 50, 51, 42, 25];
  const W2 = [75, ...W1.slice(2)];
  const H = ['On', 'Fre...', 'Lo...', 'Color', 'Linetype', 'Lineweight', 'Trans...', 'Plot St...', 'Plot', 'Ne.'];
  const cols = w => `<colgroup>${w.map(x => `<col style="width:${x}px">`).join('')}</colgroup>`;
  const rows = [['dim', '#0c0830', '178', 1, 'Default', 'Color_1...'], ['equipment', '#456d7c', '145', 3, '0.30...', 'Color_1...'], ['OBJECT', '#e00000', 'red', 1, '0.09...', 'Color_1']];
  const scroll = `<div class="scroll">${I('lt')}${I('gt')}</div>`;
  return `<header>${I('small')}<h2>Layer Filter Properties</h2><button aria-label="Close">${I('close')}</button></header>
<form onsubmit="return false"><label for="fn">Filter name:</label><input id="fn" value="Off no plot"><label>Filter definition:</label>
<div class="box b1"><table>${cols(W1)}<thead><tr><th></th><th>Sta...</th><th>Name</th>${H.map(h => `<th>${h}</th>`).join('')}</tr></thead>
<tbody><tr><td></td><td></td><td></td><td>${I('bluebulb')}</td>${'<td></td>'.repeat(7)}<td class="c"><div class="pick">${I('noprint')}${I('vdown')}<select aria-label="Plot"><option></option></select></div></td><td></td></tr><tr><td></td>${'<td></td>'.repeat(12)}</tr></tbody></table>${scroll}</div>
<label>Filter preview:</label>
<div class="box b2"><table>${cols(W2)}<thead><tr><th style="padding-left:8px">Status</th><th><div>Name${I('asc')}</div></th>${H.map(h => `<th>${h}</th>`).join('')}</tr></thead><tbody>
${rows.map(r => `<tr><td style="padding-left:1px">${I('sheet')}</td><td>${r[0]}</td><td class="c">${I('bluebulb')}</td><td class="c">${I('sun2')}</td><td class="c">${I('lock2')}</td><td><span class="sw" style="background:${r[1]}"></span>${r[2]}</td><td>Continuous</td><td><span class="w" style="height:${r[3]}px"></span>${r[4]}</td><td>0</td><td class="g">${r[5]}</td><td class="c">${I('noprint')}</td><td style="padding-left:8px">${I('newvp')}</td></tr>`).join('')}
</tbody></table>${scroll}</div>
<footer><button class="ok">OK</button><button>Cancel</button><button>Help</button></footer></form>`;
});

define('tool-tip', `:host{background:rgba(226,225,237,.86);border:1px solid rgba(150,150,165,.7);color:#505054;padding:7px 6px;line-height:15px;width:341px;height:91px}`, `<slot></slot>`);

define('view-cube', `
:host{width:90px;color:#b4b4b8}
.c{display:grid;height:98px;grid-template:16px 1fr 16px/18px 1fr 18px;place-items:center;font:bold 14px/16px "Liberation Sans",sans-serif;position:relative}
.c cad-icon{position:absolute;left:0;top:0}
.c span{position:relative}
.n,.s{grid-column:2}.w{grid-column:1}
.t{font-size:11px;color:#444}
button{width:46px;height:16px;border-radius:4px;background:#8b8b99;color:#4e4e5c;margin:16px 0 0 22px;border:1px solid #a5a5b2}`,
`<div class="c">${I('cube')}<span class="n">N</span><span class="w">W</span><span class="t">TOP</span><span>E</span><span class="s">S</span></div><button>WCS &#8212;</button>`);

define('command-line', `
:host{display:grid;grid-template-columns:50px 1fr;height:27px;background:#bcbdc0;border:1px solid #5a5c60}
.h{display:grid;grid-template-columns:11px 1fr 24px;align-items:center;justify-items:center;background:linear-gradient(#666,#484848);color:#d8d8d8}
.h i{width:5px;height:18px;background:repeating-linear-gradient(#999 0 1px,transparent 1px 3px)}
.c{display:flex;align-items:center;padding:0 4px;gap:4px;color:#555}
input{flex:1;font:italic 11px "Liberation Mono",monospace;padding-left:3px}
input::placeholder{color:#707074;opacity:1}
.u{color:#222}`,
`<div class="h"><i></i>${I('x')}${I('wrench')}</div><div class="c">${I('prompt')}${I('down5')}<input aria-label="Command" placeholder="Type a command">${I('up', 'u')}</div>`);

/* ---------- Status bar ---------- */
define('status-bar', `
:host{display:flex;justify-content:space-between;height:29px;background:#383838;border-top:1px solid #4a4a4a;color:#c8c8c8}
.l{display:flex;padding-left:12px}
.l a{display:flex;align-items:center;justify-content:center;height:17px;width:53px;color:#bbb;text-decoration:none;background:#5a5a5a;clip-path:polygon(0 0,100% 0,calc(100% - 5px) 100%,6px 100%)}
.l a.on{background:#858585;color:#fff;font-weight:700}
.l a+a{width:62px}
.l button{width:22px;height:16px;background:#555;border-radius:6px 0 6px 3px;margin-left:2px}
.r{display:flex;background:#4c4c4c;border-bottom:3px solid #3a3a3a}
.r button{border-left:1px solid transparent;border-top:1px solid #626262;border-bottom:1px solid #626262;height:26px;font-size:12px;color:#d0d0d0}
.r .d{border-left-color:#707070}
.r .b{color:#3e8be8}`,
() => {
  const items = [['=MODEL', 47, 1], ['sgrid', 25, 1], ['snap', 21], ['down', 16], ['dyn', 24, 1], ['ortho', 23, 1], ['polar', 23, 0, 1], ['down', 14], ['iso', 24], ['down', 13], ['otrack', 24, 1, 1], ['osnap', 23, 0, 1], ['down', 13], ['lwt', 23, 1, 1], ['trans', 24, 1, 1], ['sel', 25, 1], ['gizmo', 24, 1], ['anno', 26, 1, 1], ['anno2', 22], ['anno3', 23], ['=1:1', 18], ['down', 13], ['gearsolid', 24, 1], ['down', 15], ['bigplus', 24, 1], ['shapes', 25, 1], ['perf', 26, 1], ['trust', 23, 1], ['full', 27, 1], ['burger', 20]];
  return `<div class="l"><a href="#" class="on">Model</a><a href="#">Layout1</a><button aria-label="New layout">${I('plus')}</button></div><div class="r">${items.map(([n, w, d, b]) => `<button class="${d ? 'd ' : ''}${b ? 'b' : ''}" style="width:${w}px">${n[0] === '=' ? n.slice(1) : I(n)}</button>`).join('')}</div>`;
});

/* ---------- Application shell ---------- */
define('cad-app', `
:host{display:flex;flex-direction:column;height:100vh;min-height:600px;position:relative}
main{flex:1;position:relative;background:#222630;border-right:5px solid #dadef0;overflow:hidden}
main>*,.name{position:absolute}
.vp{left:3px;top:7px;font-size:12px;color:#dcdce0}
.wc{right:12px;top:10px;display:flex;gap:9px;align-items:center;color:#e4e4e8}
.ln{left:292px;top:60px;width:20px;height:2px;background:#9a9ca8}
layer-palette{left:140px;top:67px;width:929px;height:342px}
filter-dialog{left:307px;top:7px;width:672px;height:443px}
tool-tip{left:921px;top:210px}
.cur{left:921px;top:189px}
view-cube{right:15px;top:35px}
.nav{right:4px;top:191px;width:30px;height:209px;border-radius:4px;background:#555963;border:1px solid #6a6e78;color:#33363f;display:flex;align-items:flex-end;justify-content:center;padding-bottom:18px}
.ucs{left:8px;bottom:6px;color:#d0d0d4}
command-line{left:264px;right:257px;bottom:0}
.compass{left:988px;bottom:9px;color:#a9aab0;opacity:.9}
.sc{left:1028px;bottom:28px;font:400 32px/38px Lato,sans-serif;color:#8f9199}
.name{right:12px;bottom:10px;font:24px/30px "Open Sans",sans-serif;color:#c4c4c8;opacity:.65}`,
`<title-bar></title-bar><cad-ribbon></cad-ribbon><file-tabs></file-tabs>
<main><div class="vp">[&#8722;][Top][2D Wireframe]</div><div class="ln"></div><div class="wc">${I('wmin')}${I('wrest')}${I('x')}</div>
<view-cube></view-cube><div class="nav">${I('nav')}</div><layer-palette></layer-palette><filter-dialog></filter-dialog>
<tool-tip>Displays the properties of layers. You can use one or more properties to define the filter. For example, you can define a filter that displays all layers that are either red or blue and in use. To include more than one color, linetype, or lineweight, duplicate the filter on the next line and select a different setting.</tool-tip>${I('cursor', 'cur')}
<div class="ucs">${I('ucs')}</div><command-line></command-line>${I('compass', 'compass')}<div class="sc">SOURCECAD</div></main>
<status-bar></status-bar><div class="name">udemy</div>`);
</script>
</body>
</html>
